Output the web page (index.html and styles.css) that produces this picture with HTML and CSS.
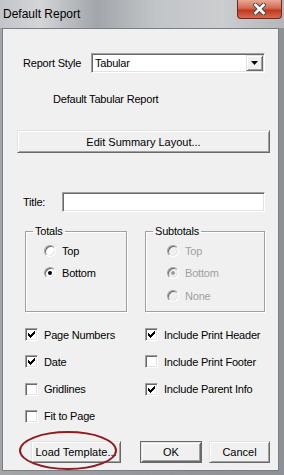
FILE: index.html
```html
<!doctype html>
<html lang="en">
  <head>
    <meta charset="UTF-8" />
    <meta name="viewport" content="width=device-width, initial-scale=1.0" />
    <title>Default Report</title>
    <link rel="stylesheet" href="styles.css">
  </head>
  <body>
    <div class="window">
      <div class="titlebar">
        <span class="title">Default Report</span>
        <div class="close">
          <svg width="13" height="12" viewBox="0 0 13 12">
            <path d="M2.5 2 L10.5 10 M10.5 2 L2.5 10" stroke="#4a4d52" stroke-width="4.6" stroke-linecap="square" fill="none" />
            <path d="M2.5 2 L10.5 10 M10.5 2 L2.5 10" stroke="#fff" stroke-width="2.6" stroke-linecap="square" fill="none" />
          </svg>
        </div>
      </div>

      <div class="client">
        <div class="style-row">
          <span class="style-label">Report Style</span>
          <div class="combo">
            <span class="combo-text">Tabular</span>
            <span class="combo-btn">
              <svg width="7" height="4" viewBox="0 0 7 4"><path d="M0 0 H7 L3.5 4 Z" fill="#000" /></svg>
            </span>
          </div>
        </div>

        <p class="desc">Default Tabular Report</p>

        <button class="btn btn-wide">Edit Summary Layout...</button>

        <div class="title-row">
          <span class="title-label">Title:</span>
          <div class="edit"></div>
        </div>

        <div class="groups">
          <fieldset class="group totals">
            <legend>Totals</legend>
            <div class="radios">
              <div class="radio-row"><span class="radio"></span>Top</div>
              <div class="radio-row"><span class="radio checked"></span>Bottom</div>
            </div>
          </fieldset>
          <fieldset class="group subtotals">
            <legend>Subtotals</legend>
            <div class="radios disabled">
              <div class="radio-row"><span class="radio"></span>Top</div>
              <div class="radio-row"><span class="radio checked"></span>Bottom</div>
              <div class="radio-row"><span class="radio"></span>None</div>
            </div>
          </fieldset>
        </div>

        <div class="checks">
          <div class="check-row"><span class="box on"></span>Page Numbers</div>
          <div class="check-row"><span class="box on"></span>Include Print Header</div>
          <div class="check-row"><span class="box on"></span>Date</div>
          <div class="check-row"><span class="box"></span>Include Print Footer</div>
          <div class="check-row"><span class="box"></span>Gridlines</div>
          <div class="check-row"><span class="box on"></span>Include Parent Info</div>
          <div class="check-row"><span class="box"></span>Fit to Page</div>
        </div>

        <div class="footer">
          <button class="btn btn-load">Load Template...</button>
          <button class="btn btn-ok">OK</button>
          <button class="btn btn-cancel">Cancel</button>
          <span class="ring"></span>
        </div>
      </div>
    </div>
  </body>
</html>
```

FILE: styles.css
```css
body {
  margin: 0;
  font-family: "Liberation Sans", Arial, sans-serif;
  font-size: 11px;
  letter-spacing: -0.2px;
  color: #000;
}

.window {
  width: 284px;
  height: 475px;
  display: flex;
  flex-direction: column;
  background: linear-gradient(90deg, #a3a6a9, #93979b 50%, #8d9094);
}

/* title bar */

.titlebar {
  flex: none;
  height: 28px;
  display: flex;
  justify-content: space-between;
  align-items: flex-start;
  background: linear-gradient(90deg, #c2c5c8 0%, #d3d5d7 14%, #a2a6aa 34%, #c2c5c8 55%, #cbcdcf 78%, #b4b7ba 100%);
}

.title {
  margin: 7px 0 0 3px;
  font-size: 12px;
  line-height: 14px;
  letter-spacing: 0;
}

.close {
  width: 45px;
  height: 19px;
  margin-right: 2px;
  box-sizing: border-box;
  border: 1px solid #6a2a20;
  border-top: none;
  border-radius: 0 0 4px 4px;
  background: linear-gradient(#eaa894, #d36a52 45%, #c0391f 58%, #d56c50);
  display: flex;
  align-items: center;
  justify-content: center;
}

/* client area */

.client {
  flex: 1;
  margin: 0 5px 4px 2px;
  background: #f0f0f0;
  border: 1px solid #7b7e82;
  display: flex;
  flex-direction: column;
  align-items: flex-start;
}

.sunken,
.combo,
.edit,
.box {
  box-sizing: border-box;
  border: 1px solid;
  border-color: #a0a0a0 #fff #fff #a0a0a0;
  box-shadow: inset 1px 1px #696969, inset -1px -1px #e3e3e3;
  background: #fff;
}

.btn,
.combo-btn {
  box-sizing: border-box;
  border: 1px solid;
  border-color: #e3e3e3 #696969 #696969 #e3e3e3;
  box-shadow: inset 1px 1px #fff, inset -1px -1px #a0a0a0;
  background: #f0f0f0;
}

.btn {
  font: inherit;
  color: #000;
  padding: 0;
  height: 22px;
}

.style-row {
  display: flex;
  align-items: center;
  margin: 24px 0 0 20px;
}

.style-label {
  width: 68px;
}

.combo {
  width: 174px;
  height: 20px;
  display: flex;
  align-items: center;
  justify-content: space-between;
}

.combo-text {
  padding-left: 3px;
}

.combo-btn {
  width: 17px;
  height: 16px;
  margin-right: 1px;
  display: flex;
  align-items: center;
  justify-content: center;
}

.desc {
  margin: 20px 0 0 50px;
  line-height: 13px;
}

.btn-wide {
  margin: 24px 0 0 14px;
  width: 253px;
  height: 23px;
}

.title-row {
  display: flex;
  align-items: center;
  margin: 39px 0 0 20px;
}

.title-label {
  width: 39px;
}

.edit {
  width: 203px;
  height: 20px;
}

/* group boxes */

.groups {
  display: flex;
  gap: 18px;
  margin: 13px 0 0 22px;
}

.group {
  margin: 0;
  padding: 0;
  height: 87px;
  box-sizing: border-box;
  border: 1px solid #a0a0a0;
  box-shadow: inset 1px 1px #fff, 1px 1px #fff;
}

.group legend {
  margin-left: 7px;
  padding: 0 2px;
  line-height: 13px;
}

.totals {
  width: 102px;
}

.subtotals {
  width: 120px;
}

.radios {
  display: flex;
  flex-direction: column;
  gap: 9.5px;
  padding-top: 6px;
}

.totals .radios {
  padding-left: 18px;
}

.subtotals .radios {
  padding-left: 21px;
}

.radio-row {
  display: flex;
  align-items: center;
  gap: 6px;
  height: 13px;
}

.radio {
  width: 12px;
  height: 12px;
  box-sizing: border-box;
  border-radius: 50%;
  border: 1px solid;
  border-color: #a0a0a0 #fff #fff #a0a0a0;
  box-shadow: inset 1px 1px #696969, inset -1px -1px #e3e3e3;
  background: #fff;
  display: flex;
  align-items: center;
  justify-content: center;
}

.radio.checked::after {
  content: "";
  width: 4px;
  height: 4px;
  border-radius: 50%;
  background: #000;
}

.disabled {
  color: #a0a0a0;
}

.disabled .radio {
  background: #f0f0f0;
}

.disabled .radio.checked::after {
  background: #a0a0a0;
}

/* check boxes */

.checks {
  display: grid;
  grid-template-columns: 120px auto;
  grid-auto-rows: 13px;
  row-gap: 14.33px;
  margin: 16px 0 0 22px;
}

.check-row {
  display: flex;
  align-items: center;
  gap: 6px;
}

.box {
  width: 13px;
  height: 13px;
  display: flex;
  align-items: center;
  justify-content: center;
}

.box.on::after {
  content: "";
  width: 7px;
  height: 7px;
  background: url("data:image/svg+xml,%3Csvg xmlns='http://www.w3.org/2000/svg' width='7' height='7' viewBox='0 0 7 7'%3E%3Cpath d='M0 2h1v1h1v1h1v-1h1v-1h1v-1h1v-1h1v3h-1v1h-1v1h-1v1h-1v1h-1v-1h-1v-1h-1z' fill='%23000'/%3E%3C/svg%3E");
}

/* bottom buttons */

.footer {
  position: relative;
  display: flex;
  margin: 18px 0 0 28px;
}

.btn-load {
  width: 90px;
}

.btn-ok {
  width: 62px;
  margin-left: 19px;
  border-color: #696969;
  box-shadow: inset 1px 1px #e3e3e3, inset -1px -1px #696969, inset 2px 2px #fff, inset -2px -2px #a0a0a0;
}

.btn-cancel {
  width: 61px;
  margin-left: 7px;
}

.ring {
  position: absolute;
  left: -12px;
  top: -10px;
  width: 98px;
  height: 39px;
  box-sizing: border-box;
  border: 2px solid #8e1c20;
  border-radius: 50%;
  pointer-events: none;
}
```
